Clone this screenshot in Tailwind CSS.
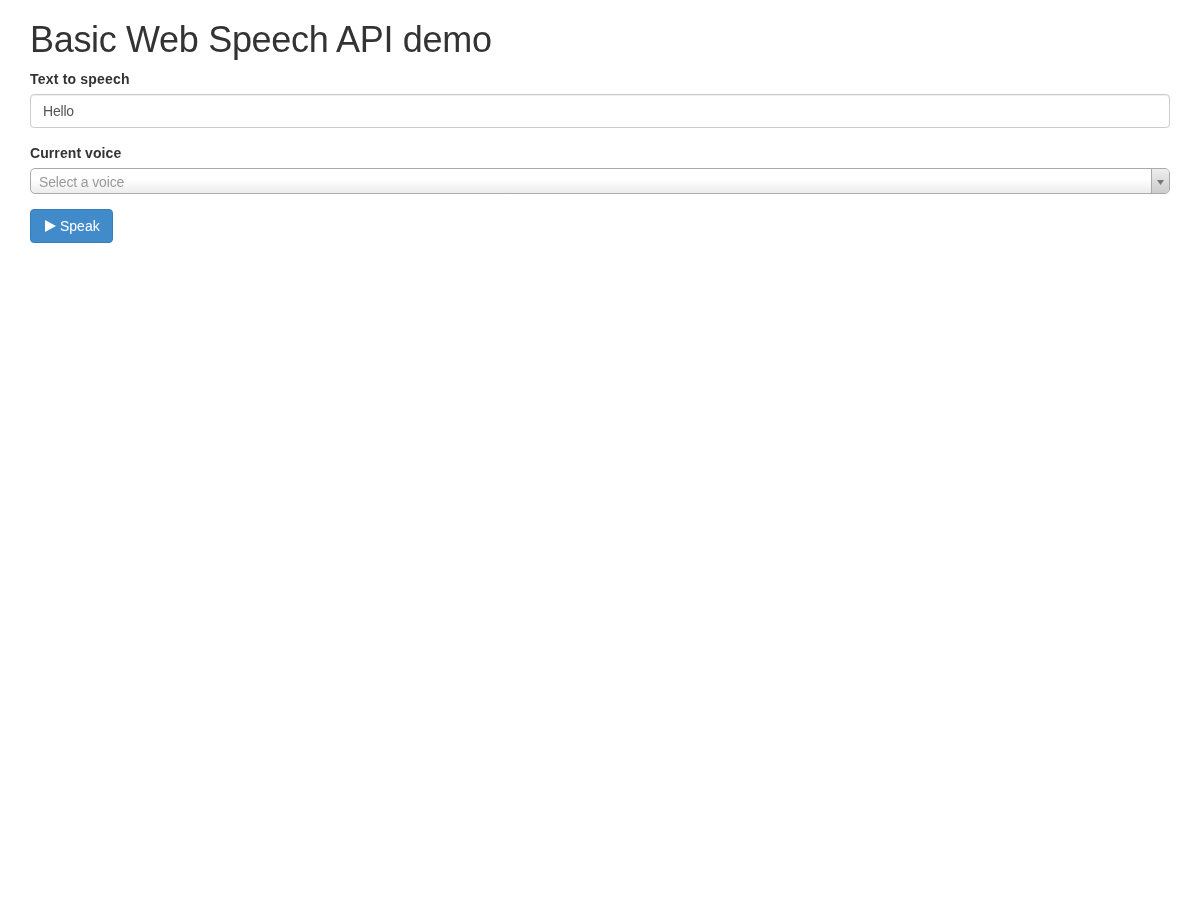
<!DOCTYPE html>
<html lang="en">
<head>
    <meta charset="UTF-8">
    <meta name="viewport" content="width=device-width, initial-scale=1.0">
    <title>Basic Web Speech API demo</title>
    <script src="https://cdn.jsdelivr.net/npm/@tailwindcss/browser@4"></script>
</head>
<body class="bg-white min-h-screen font-['Liberation_Sans',Arial,sans-serif] text-[14px] leading-[20px] text-[#333]">
    <div class="px-[30px] will-change-transform">
        <h1 class="mt-5 mb-[10px] text-[36px] leading-[39px] font-medium tracking-[-0.32px]">Basic Web Speech API demo</h1>

        <div class="mb-[15px]">
            <label class="block mb-[5px] font-bold tracking-[0.2px]">Text to speech</label>
            <input type="text" value="Hello" class="block w-full h-[34px] px-3 py-[6px] bg-white border border-[#ccc] rounded text-[#555] tracking-[-0.2px] shadow-[inset_0_1px_1px_rgba(0,0,0,0.075)] outline-none">
        </div>

        <div class="mb-[15px]">
            <label class="block mb-[5px] font-bold tracking-[0.08px]">Current voice</label>
            <div class="flex h-[26px] border border-[#aaa] rounded-[5px] overflow-hidden bg-[linear-gradient(#fff_40%,#f6f6f6_70%,#ececec_100%)]">
                <span class="flex-1 pl-2 leading-[26px] text-[#999] tracking-[-0.14px]">Select a voice</span>
                <span class="flex w-[18px] items-center justify-center border-l border-[#aaa] bg-[linear-gradient(#eee,#ccc)]">
                    <svg class="mt-[3px]" width="7" height="5" viewBox="0 0 7 5"><path d="M0 0h7L3.5 5z" fill="#777"/></svg>
                </span>
            </div>
        </div>

        <button type="button" class="flex items-center h-[34px] w-[83px] pl-[14px] bg-[#428bca] border border-[#357ebd] rounded text-white">
            <svg class="mr-[4px]" width="11" height="12" viewBox="0 0 11 12"><path d="M0 0L11 6 0 12z" fill="#fff"/></svg>
            Speak
        </button>
    </div>
</body>
</html>
